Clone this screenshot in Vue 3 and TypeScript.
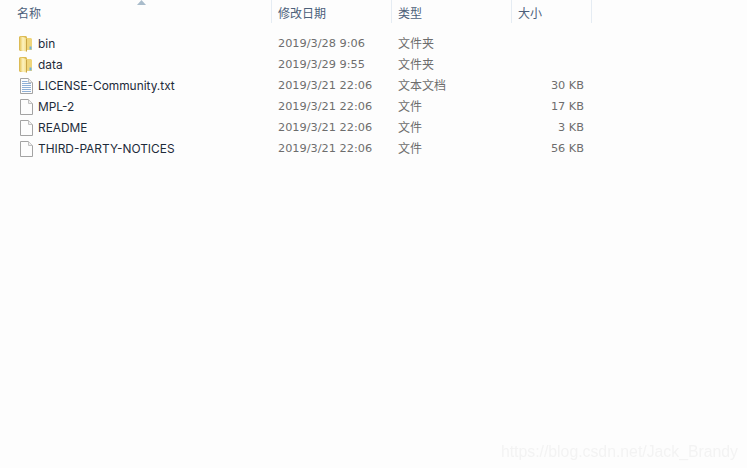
<script setup lang="ts">
interface Row { name: string; date: string; type: string; size: string; icon: 'folder' | 'text' | 'file' }
const rows: Row[] = [
  { name: 'bin', date: '2019/3/28 9:06', type: '文件夹', size: '', icon: 'folder' },
  { name: 'data', date: '2019/3/29 9:55', type: '文件夹', size: '', icon: 'folder' },
  { name: 'LICENSE-Community.txt', date: '2019/3/21 22:06', type: '文本文档', size: '30 KB', icon: 'text' },
  { name: 'MPL-2', date: '2019/3/21 22:06', type: '文件', size: '17 KB', icon: 'file' },
  { name: 'README', date: '2019/3/21 22:06', type: '文件', size: '3 KB', icon: 'file' },
  { name: 'THIRD-PARTY-NOTICES', date: '2019/3/21 22:06', type: '文件', size: '56 KB', icon: 'file' },
]
</script>

<template>
  <div class="page">
    <div class="header">
      <div class="hcell name-col">
        <span>名称</span>
        <svg class="sort" width="9" height="5" viewBox="0 0 9 5"><path d="M4.5 0 L9 5 H0 Z" fill="#a9bccb" /></svg>
      </div>
      <div class="hcell date-col">修改日期</div>
      <div class="hcell type-col">类型</div>
      <div class="hcell size-col">大小</div>
    </div>
    <div class="list">
      <div v-for="r in rows" :key="r.name" class="row">
        <div class="cell name-col name-cell">
          <svg v-if="r.icon === 'folder'" class="icon" width="16" height="17" viewBox="0 0 16 17">
            <defs>
              <linearGradient id="fold" x1="0" y1="0" x2="1" y2="0">
                <stop offset="0" stop-color="#e8c964" />
                <stop offset="0.45" stop-color="#fdf3c0" />
                <stop offset="1" stop-color="#f3dc8a" />
              </linearGradient>
            </defs>
            <path d="M1 2 L2 1 H8 L9 2 V15 L2 16 L1 15 Z" fill="#dcbb55" />
            <path d="M9 3 H13 L14 4 V15 H9 Z" fill="#efd57a" />
            <path d="M2 1.5 L7 2.5 L8.5 4 V16.5 L3 15.5 L2 14.5 Z" fill="url(#fold)" />
            <path d="M8.5 4 V16.5" stroke="#c9a544" stroke-width="1" />
            <path d="M11.5 11.5 h2 v3 h-2 Z" fill="#6fb2dc" />
          </svg>
          <svg v-else class="icon" width="16" height="16" viewBox="0 0 16 16">
            <path d="M2.5 0.5 H10.5 L14.5 4.5 V15.5 H2.5 Z" fill="#fdfdfd" stroke="#a3a3a3" />
            <path d="M10.5 0.5 V4.5 H14.5" fill="#eeeeee" stroke="#c0c0c0" />
            <g v-if="r.icon === 'text'" stroke="#8fb0d6">
              <path d="M4 3.5 H9.5 M4 5.5 H13 M4 7.5 H13 M4 9.5 H13 M4 11.5 H13 M4 13.5 H13" />
            </g>
          </svg>
          <span class="fname">{{ r.name }}</span>
        </div>
        <div class="cell date-col muted latin">{{ r.date }}</div>
        <div class="cell type-col muted cjk">{{ r.type }}</div>
        <div class="cell size-col muted right latin">{{ r.size }}</div>
      </div>
    </div>
    <div class="watermark">https://blog.csdn.net/Jack_Brandy</div>
  </div>
</template>

<style>
html, body { margin: 0; background: #fdfdfd; }
</style>

<style scoped>
.page {
  position: relative;
  width: 747px;
  height: 468px;
  overflow: hidden;
  background: #fdfdfd;
  font-family: "Noto Sans CJK SC", sans-serif;
  font-size: 12px;
}
.header {
  display: flex;
  height: 23px;
}
.hcell {
  position: relative;
  box-sizing: border-box;
  height: 23px;
  line-height: 25px;
  padding-left: 6px;
  color: #4c607a;
  border-right: 1px solid #e5ecf3;
}
.name-col { width: 272px; padding-left: 17px; }
.date-col { width: 120px; padding-left: 6px; }
.type-col { width: 120px; padding-left: 6px; }
.size-col { width: 80px; padding-left: 6px; }
.sort { position: absolute; left: 137px; top: 0; }
.list { padding-top: 10px; }
.row { display: flex; height: 21px; }
.cell {
  box-sizing: border-box;
  line-height: 21px;
  white-space: nowrap;
}
.cjk { line-height: 19px; }
.name-cell {
  display: flex;
  align-items: center;
  padding-left: 18px;
  color: #1e2b3a;
}
.fname {
  font-family: Inter, sans-serif;
  font-size: 11.9px;
  line-height: 21px;
}
.latin {
  font-family: "DejaVu Sans", sans-serif;
  font-size: 11.3px;
}
.icon { flex: none; margin-right: 4px; }
.muted { color: #6d6d6d; }
.right { text-align: right; padding: 0 8px 0 0; }
.watermark {
  position: absolute;
  right: 9px;
  bottom: 7px;
  font-family: "Liberation Sans", sans-serif;
  font-size: 15.8px;
  color: #f3f3f3;
  filter: blur(0.4px);
}
</style>
